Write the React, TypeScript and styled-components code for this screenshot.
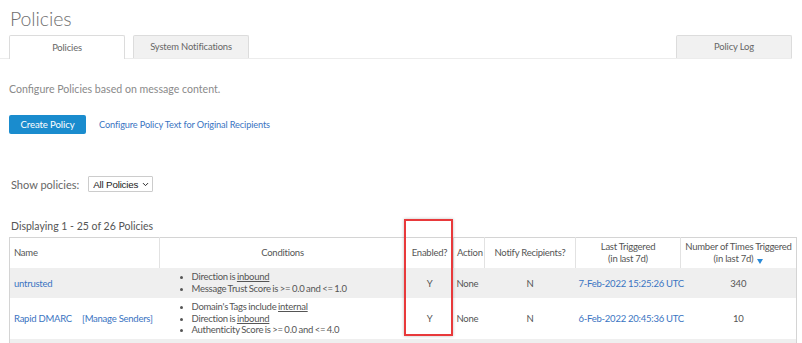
import React from "react";
import styled, { createGlobalStyle } from "styled-components";
import { ChevronDown } from "lucide-react";

const Global = createGlobalStyle`
  html, body { margin: 0; padding: 0; background: #fff; }
  body { font-family: Lato, "Open Sans", sans-serif; color: #555; }
`;

const Page = styled.div`
  width: 802px;
  height: 343px;
  overflow: hidden;
`;

const Title = styled.h1`
  margin: 0;
  padding: 7px 0 0 10px;
  height: 28px;
  font-size: 19.5px;
  font-weight: 300;
  color: #707070;
  line-height: 24px;
  letter-spacing: -0.1px;
`;

const TabBar = styled.div`
  display: flex;
  gap: 8px;
  width: 783px;
  padding: 0 0 0 9px;
  border-bottom: 1px solid #ececec;
  height: 23px;
  align-items: flex-end;
`;

const Tab = styled.div<{ $active?: boolean; $right?: boolean }>`
  box-sizing: border-box;
  width: 116px;
  display: flex;
  align-items: center;
  justify-content: center;
  padding-bottom: 1px;
  font-size: 9.4px;
  letter-spacing: -0.15px;
  color: #666;
  border: 1px solid #dcdcdc;
  border-bottom: none;
  border-radius: 2px 2px 0 0;
  background: ${(p) => (p.$active ? "#fff" : "#f1f1f1")};
  margin-left: ${(p) => (p.$right ? "auto" : "0")};
  margin-bottom: ${(p) => (p.$active ? "-1px" : "0")};
  height: ${(p) => (p.$active ? "24px" : "23px")};
`;

const Desc = styled.p`
  margin: 23px 0 0 9px;
  font-size: 10.6px;
  line-height: 14px;
  color: #8a8a8a;
`;

const Actions = styled.div`
  display: flex;
  align-items: center;
  gap: 13px;
  margin: 19px 0 0 9px;
`;

const PrimaryButton = styled.button`
  box-sizing: border-box;
  width: 77px;
  height: 19px;
  border: none;
  border-radius: 2px;
  background: #1a8cce;
  color: #fff;
  font-family: inherit;
  font-size: 9.6px;
  letter-spacing: -0.1px;
  padding: 0;
  cursor: pointer;
`;

const Link = styled.a`
  color: #3a74c2;
  font-size: 9.2px;
  letter-spacing: -0.12px;
  text-decoration: none;
  cursor: pointer;
`;

const FilterRow = styled.div`
  display: flex;
  align-items: center;
  gap: 9px;
  margin: 42px 0 0 11px;
  height: 16px;
`;

const FilterLabel = styled.span`
  font-size: 11px;
  color: #666;
`;

const SelectBox = styled.div`
  position: relative;
  width: 65px;
  height: 16px;
`;

const Select = styled.select`
  box-sizing: border-box;
  appearance: none;
  -webkit-appearance: none;
  display: block;
  height: 16px;
  width: 65px;
  font-family: "Liberation Sans", Arial, sans-serif;
  font-size: 9.8px;
  letter-spacing: -0.2px;
  color: #222;
  border: 1px solid #ccc;
  background: #fff;
  padding: 0 0 0 4px;
  border-radius: 1px;
  outline: none;
`;

const Chevron = styled(ChevronDown)`
  position: absolute;
  display: block;
  right: 3px;
  top: 3.5px;
  width: 9px;
  height: 9px;
  color: #222;
  pointer-events: none;
`;

const Count = styled.div`
  margin: 27px 0 0 11px;
  font-size: 10.5px;
  line-height: 14px;
  color: #555;
`;

const TableWrap = styled.div`
  position: relative;
  margin: 4px 0 0 9px;
  width: 787px;
`;

const Table = styled.table`
  border-collapse: collapse;
  table-layout: fixed;
  width: 787px;
  border: 1px solid #d4d4d4;
  border-bottom: none;
  font-size: 9.5px;
  letter-spacing: -0.25px;
  color: #555;
`;

const Th = styled.th<{ $align?: string }>`
  height: 30px;
  padding: 0 3px;
  font-weight: 400;
  font-size: 9.5px;
  line-height: 12px;
  color: #555;
  white-space: nowrap;
  text-align: ${(p) => p.$align || "center"};
  border-left: 1px solid #e2e2e2;
  &:first-child { border-left: none; padding-left: 4px; }
`;

const Row = styled.tr<{ $shade?: boolean }>`
  background: ${(p) => (p.$shade ? "#efefef" : "#fff")};
`;

const Td = styled.td<{ $align?: string; $h?: number }>`
  height: ${(p) => p.$h || 30}px;
  padding: 0 3px;
  text-align: ${(p) => p.$align || "center"};
  vertical-align: middle;
  color: #555;
  font-size: 9.5px;
  white-space: nowrap;
  &:first-child { padding-left: 4px; }
`;

const NameCell = styled.div`
  display: flex;
  align-items: center;
`;

const NameLink = styled.a<{ $w?: number }>`
  color: #3a74c2;
  text-decoration: none;
  width: ${(p) => (p.$w ? `${p.$w}px` : "auto")};
  cursor: pointer;
`;

const Conds = styled.ul`
  margin: 0;
  padding: 0 0 0 29px;
  text-align: left;
  list-style: disc;
  line-height: 11.6px;
  word-spacing: -0.6px;
  li::marker { font-size: 8px; }
`;

const U = styled.span`
  text-decoration: underline;
`;

const DateLink = styled.a`
  color: #3a74c2;
  text-decoration: none;
`;

const SortArrow = styled.span`
  display: inline-block;
  width: 0;
  height: 0;
  margin-left: 4px;
  border-left: 3.5px solid transparent;
  border-right: 3.5px solid transparent;
  border-top: 5px solid #2a8ad8;
  vertical-align: -2px;
`;

const Highlight = styled.div`
  position: absolute;
  left: 395px;
  top: -18px;
  width: 49px;
  height: 117px;
  box-sizing: border-box;
  border: 2px solid #e8393b;
  box-shadow: 0 0 3px rgba(0, 0, 0, 0.25);
  pointer-events: none;
`;

export default function App() {
  return (
    <Page>
      <Global />
      <Title>Policies</Title>
      <TabBar>
        <Tab $active>Policies</Tab>
        <Tab>System Notifications</Tab>
        <Tab $right>Policy Log</Tab>
      </TabBar>
      <Desc>Configure Policies based on message content.</Desc>
      <Actions>
        <PrimaryButton>Create Policy</PrimaryButton>
        <Link>Configure Policy Text for Original Recipients</Link>
      </Actions>
      <FilterRow>
        <FilterLabel>Show policies:</FilterLabel>
        <SelectBox>
          <Select defaultValue="all">
            <option value="all">All Policies</option>
          </Select>
          <Chevron strokeWidth={2.6} />
        </SelectBox>
      </FilterRow>
      <Count>Displaying 1 - 25 of 26 Policies</Count>
      <TableWrap>
        <Table>
          <colgroup>
            <col style={{ width: 150 }} />
            <col style={{ width: 246 }} />
            <col style={{ width: 48 }} />
            <col style={{ width: 31 }} />
            <col style={{ width: 91 }} />
            <col style={{ width: 105 }} />
            <col style={{ width: 116 }} />
          </colgroup>
          <thead>
            <tr>
              <Th $align="left">Name</Th>
              <Th>Conditions</Th>
              <Th>Enabled?</Th>
              <Th>Action</Th>
              <Th>Notify Recipients?</Th>
              <Th>
                Last Triggered
                <br />
                (in last 7d)
              </Th>
              <Th>
                Number of Times Triggered
                <br />
                (in last 7d)
                <SortArrow />
              </Th>
            </tr>
          </thead>
          <tbody>
            <Row $shade>
              <Td $align="left">
                <NameCell>
                  <NameLink>untrusted</NameLink>
                </NameCell>
              </Td>
              <Td>
                <Conds>
                  <li>
                    Direction is <U>inbound</U>
                  </li>
                  <li>Message Trust Score is &gt;= 0.0 and &lt;= 1.0</li>
                </Conds>
              </Td>
              <Td>Y</Td>
              <Td $align="left">None</Td>
              <Td>N</Td>
              <Td>
                <DateLink>7-Feb-2022 15:25:26 UTC</DateLink>
              </Td>
              <Td>340</Td>
            </Row>
            <Row>
              <Td $align="left" $h={41}>
                <NameCell>
                  <NameLink $w={68}>Rapid DMARC</NameLink>
                  <NameLink>[Manage Senders]</NameLink>
                </NameCell>
              </Td>
              <Td $h={41}>
                <Conds>
                  <li>
                    Domain's Tags include <U>internal</U>
                  </li>
                  <li>
                    Direction is <U>inbound</U>
                  </li>
                  <li>Authenticity Score is &gt;= 0.0 and &lt;= 4.0</li>
                </Conds>
              </Td>
              <Td $h={41}>Y</Td>
              <Td $align="left" $h={41}>None</Td>
              <Td $h={41}>N</Td>
              <Td $h={41}>
                <DateLink>6-Feb-2022 20:45:36 UTC</DateLink>
              </Td>
              <Td $h={41}>10</Td>
            </Row>
            <Row $shade>
              <Td $h={30} colSpan={7} />
            </Row>
          </tbody>
        </Table>
        <Highlight />
      </TableWrap>
    </Page>
  );
}
